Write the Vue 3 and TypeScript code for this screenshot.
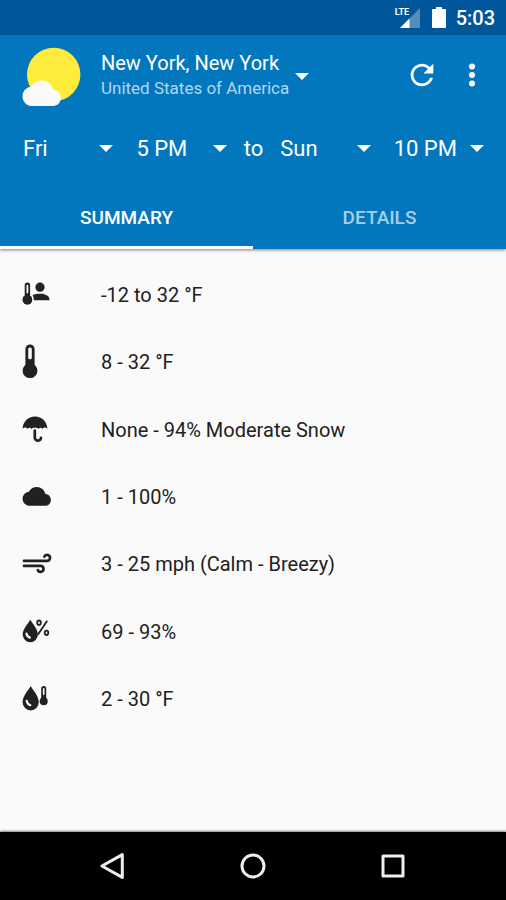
<script setup lang="ts">
import { ref } from 'vue'

type IconName = 'feels' | 'temp' | 'rain' | 'cloud' | 'wind' | 'humidity' | 'dew'

interface Reading {
  icon: IconName
  label: string
  value: string
}

const days = ['Fri', 'Sat', 'Sun']
const hours = ['5 PM', '10 PM']

const fromDay = ref('Fri')
const fromHour = ref('5 PM')
const toDay = ref('Sun')
const toHour = ref('10 PM')
const activeTab = ref<'summary' | 'details'>('summary')

const readings: Reading[] = [
  { icon: 'feels', label: 'Feels like', value: '-12 to 32 °F' },
  { icon: 'temp', label: 'Temperature', value: '8 - 32 °F' },
  { icon: 'rain', label: 'Precipitation', value: 'None - 94% Moderate Snow' },
  { icon: 'cloud', label: 'Cloud cover', value: '1 - 100%' },
  { icon: 'wind', label: 'Wind', value: '3 - 25 mph (Calm - Breezy)' },
  { icon: 'humidity', label: 'Humidity', value: '69 - 93%' },
  { icon: 'dew', label: 'Dew point', value: '2 - 30 °F' },
]
</script>

<template>
  <div class="screen">
    <div class="status">
      <div class="signal">
        <svg width="21" height="20" viewBox="0 0 21 20" aria-hidden="true">
          <path d="M0 20 20 0V20Z" fill="#fff" fill-opacity=".32" />
          <path d="M0 20 9.500 10.500V20Z" fill="#fff" />
        </svg>
        <span class="lte">LTE</span>
      </div>
      <svg width="14" height="21" viewBox="0 0 14 21" aria-hidden="true">
        <path d="M4 0h6v2h3a1 1 0 0 1 1 1v17a1 1 0 0 1-1 1H1a1 1 0 0 1-1-1V3a1 1 0 0 1 1-1h3Z" fill="#fff" />
      </svg>
      <span class="clock">5:03</span>
    </div>

    <header class="header">
      <div class="toolbar">
        <svg class="weather" width="60" height="60" viewBox="0 0 60 60" aria-hidden="true">
          <circle cx="31.700" cy="28.500" r="26.700" fill="#ffeb3b" />
          <path
            transform="translate(.5 28) scale(1.600)"
            d="M19.350 10.040C18.670 6.590 15.640 4 12 4 9.110 4 6.600 5.640 5.350 8.040 2.340 8.360 0 10.910 0 14c0 3.310 2.690 6 6 6h13c2.760 0 5-2.240 5-5 0-2.640-2.050-4.780-4.650-4.960z"
            fill="#fafafa"
          />
        </svg>
        <button class="location" type="button">
          <span class="place">
            <span class="city">New York, New York</span>
            <span class="country">United States of America</span>
          </span>
          <svg width="14" height="7" viewBox="0 0 14 7" aria-hidden="true"><path d="M0 0h14L7 7z" fill="#fff" /></svg>
        </button>
        <div class="actions">
          <button type="button" aria-label="Refresh">
            <svg width="34" height="34" viewBox="0 0 24 24" aria-hidden="true">
              <path
                d="M17.650 6.350C16.200 4.900 14.210 4 12 4c-4.420 0-7.990 3.580-7.990 8s3.570 8 7.990 8c3.730 0 6.840-2.550 7.730-6h-2.080c-.82 2.330-3.040 4-5.650 4-3.310 0-6-2.690-6-6s2.690-6 6-6c1.660 0 3.140.69 4.220 1.780L13 11h7V4l-2.350 2.350z"
                fill="#fff"
              />
            </svg>
          </button>
          <button type="button" aria-label="More options">
            <svg width="34" height="34" viewBox="0 0 34 34" aria-hidden="true" fill="#fff">
              <circle cx="17" cy="8.500" r="3" />
              <circle cx="17" cy="17" r="3" />
              <circle cx="17" cy="25.500" r="3" />
            </svg>
          </button>
        </div>
      </div>

      <div class="range">
        <div class="moment">
          <label class="picker">
            <select v-model="fromDay" aria-label="From day">
              <option v-for="d in days" :key="d">{{ d }}</option>
            </select>
            <svg width="14" height="7" viewBox="0 0 14 7" aria-hidden="true"><path d="M0 0h14L7 7z" fill="#fff" /></svg>
          </label>
          <label class="picker">
            <select v-model="fromHour" aria-label="From hour">
              <option v-for="h in hours" :key="h">{{ h }}</option>
            </select>
            <svg width="14" height="7" viewBox="0 0 14 7" aria-hidden="true"><path d="M0 0h14L7 7z" fill="#fff" /></svg>
          </label>
        </div>
        <span>to</span>
        <div class="moment">
          <label class="picker">
            <select v-model="toDay" aria-label="To day">
              <option v-for="d in days" :key="d">{{ d }}</option>
            </select>
            <svg width="14" height="7" viewBox="0 0 14 7" aria-hidden="true"><path d="M0 0h14L7 7z" fill="#fff" /></svg>
          </label>
          <label class="picker">
            <select v-model="toHour" aria-label="To hour">
              <option v-for="h in hours" :key="h">{{ h }}</option>
            </select>
            <svg width="14" height="7" viewBox="0 0 14 7" aria-hidden="true"><path d="M0 0h14L7 7z" fill="#fff" /></svg>
          </label>
        </div>
      </div>

      <div class="tabs" role="tablist">
        <button
          type="button"
          role="tab"
          :class="{ active: activeTab === 'summary' }"
          :aria-selected="activeTab === 'summary'"
          @click="activeTab = 'summary'"
        >SUMMARY</button>
        <button
          type="button"
          role="tab"
          :class="{ active: activeTab === 'details' }"
          :aria-selected="activeTab === 'details'"
          @click="activeTab = 'details'"
        >DETAILS</button>
      </div>
    </header>

    <main class="content">
      <ul class="readings">
        <li v-for="r in readings" :key="r.icon">
          <svg width="32" height="36" viewBox="0 0 32 36" role="img" :aria-label="r.label" fill="#212121">
            <template v-if="r.icon === 'feels'">
              <rect x="2.700" y="5.500" width="5.400" height="17" rx="2.700" />
              <circle cx="5.400" cy="22.800" r="4.900" />
              <rect x="4.500" y="7.800" width="1.800" height="8.500" rx=".9" fill="#fafafa" />
              <circle cx="18" cy="10.200" r="4.600" />
              <path d="M10.500 18C13 17 15.500 16.700 18 16.700c4.600 0 9.400 2 9.400 5v1.500H11.800c0-2-.3-3.600-1.300-5.200Z" />
            </template>
            <template v-else-if="r.icon === 'temp'">
              <rect x="3.400" y=".4" width="9.200" height="28" rx="4.600" />
              <circle cx="8" cy="26.700" r="7.400" />
              <rect x="6.200" y="3.500" width="3.600" height="11.800" rx="1.600" fill="#fafafa" />
            </template>
            <template v-else-if="r.icon === 'rain'">
              <path d="M.6 16.800C.8 9.800 6 4.400 13 4.400s12.200 5.400 12.400 12.400c-1.500-1.700-3.700-1.700-4.900.2-1.100-1.700-2.900-1.700-3.900 0-1-1.700-6.200-1.700-7.200 0-1-1.700-2.800-1.700-3.900 0-1.200-1.900-3.400-1.900-4.900-.2Z" />
              <path d="M12.800 18.500v6.800a3.100 3.100 0 0 0 6.200.5" fill="none" stroke="#212121" stroke-width="2.700" stroke-linecap="round" />
            </template>
            <path
              v-else-if="r.icon === 'cloud'"
              transform="translate(.6 3.200) scale(1.180)"
              d="M19.350 10.040C18.670 6.590 15.640 4 12 4 9.110 4 6.600 5.640 5.350 8.040 2.340 8.360 0 10.910 0 14c0 3.310 2.690 6 6 6h13c2.760 0 5-2.240 5-5 0-2.640-2.050-4.780-4.650-4.960z"
            />
            <path
              v-else-if="r.icon === 'wind'"
              d="M2 14.900H25a3 3 0 1 0-2.700-4.300M2 19.900H18.500a3 3 0 1 1-2.700 4.300"
              fill="none"
              stroke="#212121"
              stroke-width="2.700"
              stroke-linecap="round"
            />
            <template v-else-if="r.icon === 'humidity'">
              <path d="M8.300 5.800C10 9 15.900 15 15.900 20.600a7.600 7.700 0 0 1-15.200 0C.7 15 6.600 9 8.300 5.800Z" />
              <path d="M4.500 19.700c.2 2 1.300 3.300 3.300 3.900" fill="none" stroke="#fafafa" stroke-width="2.200" stroke-linecap="round" />
              <g fill="none" stroke="#212121" stroke-width="1.800">
                <ellipse cx="17" cy="8.700" rx="1.800" ry="2.200" />
                <ellipse cx="24.500" cy="18.800" rx="1.800" ry="2.200" />
                <path d="M25.200 6.800 16 20.600" />
              </g>
            </template>
            <template v-else>
              <path d="M8.700 5C10.500 8.500 16.800 15 16.800 21.300a8.100 8.100 0 0 1-16.200 0C.6 15 6.900 8.500 8.700 5Z" />
              <path d="M4.700 19.800c.3 2.200 1.500 3.700 3.700 4.400" fill="none" stroke="#fafafa" stroke-width="2.200" stroke-linecap="round" />
              <rect x="19.200" y="5" width="5" height="15" rx="2.500" />
              <circle cx="21.700" cy="20.300" r="4" />
              <rect x="20.900" y="7" width="1.600" height="7" rx=".8" fill="#fafafa" />
            </template>
          </svg>
          <span>{{ r.value }}</span>
        </li>
      </ul>
    </main>

    <nav class="nav" aria-label="System">
      <button type="button" aria-label="Back">
        <svg width="28" height="28" viewBox="0 0 28 28" aria-hidden="true">
          <path d="M2.900 14 23.300 2.600V25.400Z" />
        </svg>
      </button>
      <button type="button" aria-label="Home">
        <svg width="28" height="28" viewBox="0 0 28 28" aria-hidden="true"><circle cx="14" cy="14" r="11" /></svg>
      </button>
      <button type="button" aria-label="Recent apps">
        <svg width="28" height="28" viewBox="0 0 28 28" aria-hidden="true"><rect x="4" y="4" width="20" height="20" /></svg>
      </button>
    </nav>
  </div>
</template>

<style>
body {
  margin: 0;
}
</style>

<style scoped>
.screen {
  display: flex;
  flex-direction: column;
  min-height: 100vh;
  background: #fafafa;
  color: #212121;
  font-family: Roboto, "Liberation Sans", sans-serif;
  font-size: 20px;
}

svg {
  display: block;
  flex: none;
}

button,
select {
  margin: 0;
  padding: 0;
  border: 0;
  border-radius: 0;
  background: none;
  color: inherit;
  font: inherit;
  cursor: pointer;
}

.status {
  display: flex;
  align-items: center;
  justify-content: flex-end;
  height: 35px;
  padding-right: 11px;
  background: #01579b;
  color: #fff;
}

.signal {
  position: relative;
  margin-right: 11px;
}

.lte {
  position: absolute;
  top: 0;
  left: -5px;
  font-size: 9px;
  line-height: 9px;
  font-weight: 700;
}

.clock {
  margin-left: 10px;
  font-weight: 500;
}

.header {
  position: relative;
  background: #0277bd;
  color: #fff;
  box-shadow: 0 1px 3px rgba(0, 0, 0, 0.5);
}

.toolbar {
  display: flex;
  align-items: center;
  height: 79px;
  padding: 0 9px 0 22px;
}

.weather {
  margin-top: 3px;
}

.location {
  display: flex;
  align-items: center;
  gap: 6px;
  margin-left: 19px;
  padding-top: 3px;
  text-align: left;
}

.place {
  display: flex;
  flex-direction: column;
}

.city,
.country {
  line-height: 25px;
}

.country {
  font-size: 17px;
  color: #b3d6eb;
}

.actions {
  display: flex;
  margin-left: auto;
}

.actions button {
  display: flex;
  justify-content: center;
  width: 50px;
}

.range {
  display: flex;
  align-items: center;
  gap: 17px;
  height: 69px;
  padding: 0 22px 0 23px;
  font-size: 22px;
}

.moment {
  display: flex;
  flex: 1;
  gap: 23px;
}

.picker {
  position: relative;
  display: flex;
  flex: 1;
  align-items: center;
}

.picker select {
  width: 100%;
  appearance: none;
}

.picker option {
  color: #212121;
}

.picker svg {
  position: absolute;
  right: 0;
  pointer-events: none;
}

.tabs {
  display: flex;
  height: 66px;
}

.tabs button {
  flex: 1;
  padding-top: 6px;
  border-bottom: 3px solid transparent;
  color: #a6cfe7;
  font-size: 19px;
  font-weight: 500;
}

.tabs .active {
  border-bottom-color: #fff;
  color: #fff;
}

.content {
  flex: 1;
}

.readings {
  display: grid;
  grid-auto-rows: 1fr;
  min-height: 472px;
  margin: 0;
  padding: 12px 22px 0;
  list-style: none;
}

.readings li {
  display: flex;
  align-items: center;
  gap: 47px;
}

.nav {
  display: flex;
  height: 68px;
  padding: 0 43px;
  background: #000;
  box-shadow: 0 -1px 2px rgba(0, 0, 0, 0.5);
}

.nav button {
  display: flex;
  flex: 1;
  align-items: center;
  justify-content: center;
}

.nav svg {
  fill: none;
  stroke: #eee;
  stroke-width: 3;
  stroke-linejoin: round;
}
</style>
